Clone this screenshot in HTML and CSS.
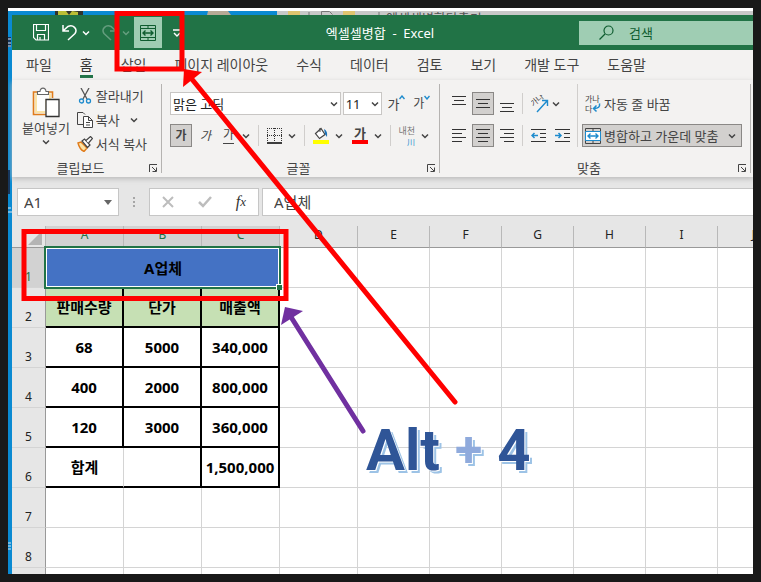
FILE: index.html
```html
<!DOCTYPE html>
<html lang="ko">
<head>
<meta charset="utf-8">
<title>엑셀셀병합 - Excel</title>
<link rel="stylesheet" href="styles.css">
</head>
<body>
<svg class="defs" aria-hidden="true">
  <symbol id="chev" viewBox="0 0 8 8"><path d="M1 2.500 4 5.500 7 2.500" fill="none" stroke="currentColor" stroke-width="1.500"/></symbol>
  <symbol id="launch" viewBox="0 0 9 9"><path d="M.5 8V.5H8M3 3l4 4M7.500 3.500V7.500H3.500" fill="none" stroke="currentColor"/></symbol>
  <symbol id="merge" viewBox="0 0 16 16"><path d="M.5.5h15v15H.5zM8 .5v3M8 12.500v3" fill="none" stroke="var(--edge)"/><path d="M.5 3.500h15v9H.5z" fill="var(--fill)" stroke="var(--mark)"/><path d="M3 8h10M5.500 5.500 3 8l2.500 2.500M10.500 5.500 13 8l-2.500 2.500" fill="none" stroke="var(--mark)" stroke-width="1.400"/></symbol>
</svg>
<div class="desktop">
  <div class="behind">
    <svg width="270" height="4" aria-hidden="true"><path d="M47 0h28v4H47z" fill="#30322c"/><path d="M50 0h8l3 4H50zM64 0l6 1v3h-9z" fill="#b9bd35"/><path d="M200 0h20l3 4h-24z" fill="#b7aa96"/></svg>
    <svg width="108" height="4" aria-hidden="true"><path d="M10 0h12v4H10zM65 0h12v4H65z" fill="#dfc46f"/><path d="M31 1v3M101 1v3" stroke="#777"/><path d="M43.500 4V.5h8l3 3" fill="none" stroke="#777"/></svg>
    <span class="behind-title">엑셀셀병합단축키</span>
  </div>
  <div class="window">
    <header class="titlebar">
      <div class="qat">
        <button class="q save" aria-label="저장"><svg width="16" height="17" viewBox="0 0 16 17"><path d="M.5.5h15v15.500H3L.5 13.500zM3.500.5v6h9v-6M4.500 16v-5.500h7V16M7 13v3" fill="none" stroke="#fff" stroke-width="1.200"/></svg></button>
        <button class="q" aria-label="실행 취소"><svg width="15" height="17" viewBox="0 0 15 17"><path d="M1 1v6h6M1.500 6.500 6 2.500C11 0 16 5 13 9.500L6 16" fill="none" stroke="#fff" stroke-width="1.500"/></svg></button>
        <button class="q chevb" aria-label="실행 취소 목록"><svg width="8" height="8"><use href="#chev"/></svg></button>
        <button class="q dim redo" aria-label="다시 실행"><svg width="15" height="17" viewBox="0 0 15 17"><path d="M14 1v6H8M13.500 6.500 9 2.500C4 0-1 5 2 9.500L9 16" fill="none" stroke="#fff" stroke-width="1.500"/></svg></button>
        <button class="q chevb dim" aria-label="다시 실행 목록"><svg width="8" height="8"><use href="#chev"/></svg></button>
        <button class="q mergeq" aria-label="병합하고 가운데 맞춤 빠른 실행"><svg width="16" height="16"><use href="#merge"/></svg></button>
        <button class="q more" aria-label="빠른 실행 도구 모음 사용자 지정"><svg width="8" height="8" viewBox="0 0 8 8"><path d="M0 1h8M1 4l3 3 3-3" fill="none" stroke="#fff" stroke-width="1.400"/></svg></button>
      </div>
      <h1 class="title">엑셀셀병합&nbsp; -&nbsp; Excel</h1>
      <label class="search"><svg width="15" height="15" viewBox="0 0 15 15"><circle cx="9.500" cy="5.500" r="4.500" fill="none" stroke="#0e5c2f" stroke-width="1.200"/><path d="M6 9 .5 14.500" stroke="#0e5c2f" stroke-width="1.300"/></svg><input type="text" placeholder="검색" aria-label="검색"></label>
    </header>
    <nav class="tabs">
      <a href="#">파일</a><a href="#" class="on">홈</a><a href="#">삽입</a><a href="#">페이지 레이아웃</a><a href="#">수식</a><a href="#">데이터</a><a href="#">검토</a><a href="#">보기</a><a href="#">개발 도구</a><a href="#">도움말</a>
    </nav>
    <div class="ribbon">
      <section class="group clip">
        <div class="body">
          <button class="paste"><svg width="28" height="31" viewBox="0 0 28 31"><path d="M7 5H1.500v22.500H14" fill="none" stroke="#e07b1a" stroke-width="1.600"/><path d="M15 5h5.500v6" fill="none" stroke="#e07b1a" stroke-width="1.600"/><path d="M3 6.500h16V12h-5.500v14H3z" fill="#fbe3a5"/><path d="M5 8h12v4h-4v12H5z" fill="#fdfdfd"/><path d="M5.500 7.500v-3H8C8.500 0 13.500 0 14 4.500h2.500v3z" fill="#fff" stroke="#666" stroke-width="1.100"/><path d="M14 12.500h13v17H14z" fill="#fff" stroke="#333" stroke-width="1.300"/></svg><span>붙여넣기</span><svg width="8" height="8"><use href="#chev"/></svg></button>
          <div class="stack">
            <button><svg width="16" height="16" viewBox="0 0 16 16"><path d="m4 0 6 11M12 0 6 11" fill="none" stroke="#555" stroke-width="1.300"/><circle cx="4.500" cy="13" r="2" fill="none" stroke="#1e8bcd" stroke-width="1.300"/><circle cx="11.500" cy="13" r="2" fill="none" stroke="#1e8bcd" stroke-width="1.300"/></svg>잘라내기</button>
            <button><svg width="16" height="16" viewBox="0 0 16 16"><path d="M6 12.500H.5V.5H6l2 2" fill="none" stroke="#444"/><path d="M6.500 4.500h5l4 4v7h-9zM11.500 4.500v4h4M9 10.500h4M9 13h4" fill="#fff" stroke="#444"/></svg>복사<svg class="cv" width="8" height="8"><use href="#chev"/></svg></button>
            <button><svg width="16" height="16" viewBox="0 0 16 16"><path d="m1 7 3-1 6 6-3 3.500C4 14 2 11 1 7z" fill="#fbe3a5" stroke="#e07b1a" stroke-width="1.400"/><path d="m5 5 2.500-2 5.500 6-2.500 2.500z" fill="#fff" stroke="#444" stroke-width="1.200"/><path d="m9 4.500 4.500-4 2 2-4 4.500" fill="#fff" stroke="#444" stroke-width="1.200"/></svg>서식 복사</button>
          </div>
        </div>
        <footer><span>클립보드</span><button aria-label="클립보드 옵션"><svg width="9" height="9"><use href="#launch"/></svg></button></footer>
      </section>
      <section class="group font">
        <div class="rows">
          <div class="row">
            <span class="combo face"><select aria-label="글꼴"><option>맑은 고딕</option></select><svg width="8" height="8"><use href="#chev"/></svg></span>
            <span class="combo size"><select aria-label="글꼴 크기"><option>11</option></select><svg width="8" height="8"><use href="#chev"/></svg></span>
            <button class="t grow" aria-label="글꼴 크기 크게">가<svg width="6" height="5" viewBox="0 0 6 5"><path d="m.5 4 2.500-3 2.500 3" fill="none" stroke="#1e8bcd" stroke-width="1.400"/></svg></button>
            <button class="t shrink" aria-label="글꼴 크기 작게">가<svg width="6" height="5" viewBox="0 0 6 5"><path d="m.5 1 2.500 3 2.500-3" fill="none" stroke="#1e8bcd" stroke-width="1.400"/></svg></button>
          </div>
          <div class="row">
            <button class="t on b">가</button>
            <button class="t i">가</button>
            <button class="t u"><span>가</span><svg width="8" height="8"><use href="#chev"/></svg></button>
            <i class="sep"></i>
            <button class="t" aria-label="테두리"><svg width="15" height="16" viewBox="0 0 15 16"><path d="M.5 0v14M7.500 0v14M14.500 0v14M0 .5h15M0 7.500h15" stroke="#333" stroke-dasharray="1 1"/><path d="M0 15h15" stroke="#000" stroke-width="1.500"/></svg><svg width="8" height="8"><use href="#chev"/></svg></button>
            <i class="sep"></i>
            <button class="t" aria-label="채우기 색"><svg width="16" height="17" viewBox="0 0 16 17"><path d="M0 13h16v4H0z" fill="#ff0"/><path d="m2.500 6.500 5.500-5 4 6-5.500 4z" fill="#fff" stroke="#444" stroke-width="1.200"/><path d="M7 5V1" stroke="#444"/><path d="M11 2q4 2 3 8l-2-3z" fill="#1e73b8"/></svg><svg width="8" height="8"><use href="#chev"/></svg></button>
            <button class="t color" aria-label="글꼴 색"><span>가</span><svg width="8" height="8"><use href="#chev"/></svg></button>
            <i class="sep"></i>
            <button class="t ruby" aria-label="윗주 필드"><span>내천<small>川</small></span><svg width="8" height="8"><use href="#chev"/></svg></button>
          </div>
        </div>
        <footer><span>글꼴</span><button aria-label="글꼴 옵션"><svg width="9" height="9"><use href="#launch"/></svg></button></footer>
      </section>
      <section class="group align">
        <div class="body">
          <div class="rows">
            <div class="row">
              <button class="t sq" aria-label="위쪽 맞춤"><svg width="14" height="18"><path d="M0 1.500h14M2 5.500h10M0 9.500h14" stroke="#333"/></svg></button>
              <button class="t sq on" aria-label="가운데 맞춤"><svg width="14" height="18"><path d="M0 4.500h14M2 8.500h10M0 12.500h14" stroke="#333"/></svg></button>
              <button class="t sq" aria-label="아래쪽 맞춤"><svg width="14" height="18"><path d="M0 8.500h14M2 12.500h10M0 16.500h14" stroke="#333"/></svg></button>
              <i class="sep"></i>
              <button class="t orient" aria-label="방향"><svg width="18" height="18" viewBox="0 0 18 18"><text class="tiny" x="0" y="10" transform="rotate(-40 4 8)">가나</text><path d="M6 17 16 6M11 5.500h5.500V11" fill="none" stroke="#1e8bcd" stroke-width="1.400"/></svg><svg width="8" height="8"><use href="#chev"/></svg></button>
            </div>
            <div class="row">
              <button class="t sq" aria-label="왼쪽 맞춤"><svg width="14" height="14"><path d="M0 .5h14M0 4.500h10M0 8.500h14M0 12.500h10" stroke="#333"/></svg></button>
              <button class="t sq on" aria-label="텍스트 가운데"><svg width="14" height="14"><path d="M0 .5h14M2 4.500h10M0 8.500h14M2 12.500h10" stroke="#333"/></svg></button>
              <button class="t sq" aria-label="오른쪽 맞춤"><svg width="14" height="14"><path d="M0 .5h14M4 4.500h10M0 8.500h14M4 12.500h10" stroke="#333"/></svg></button>
              <i class="sep"></i>
              <button class="t" aria-label="내어쓰기"><svg width="15" height="14" viewBox="0 0 15 14"><path d="M0 .5h15M9 4.500h6M9 8.500h6M0 12.500h15" stroke="#333"/><path d="M1 6.500h6M3.500 4 1 6.500 3.500 9" fill="none" stroke="#1e8bcd" stroke-width="1.500"/></svg></button>
              <button class="t" aria-label="들여쓰기"><svg width="15" height="14" viewBox="0 0 15 14"><path d="M0 .5h15M9 4.500h6M9 8.500h6M0 12.500h15" stroke="#333"/><path d="M0 6.500h6M3.500 4 6 6.500 3.500 9" fill="none" stroke="#1e8bcd" stroke-width="1.500"/></svg></button>
            </div>
          </div>
          <div class="rows wraps">
            <div class="row"><button class="t wide"><svg width="16" height="20" viewBox="0 0 16 20"><text class="tiny" x="0" y="8">가나</text><text class="tiny" x="0" y="18">다</text><path d="M14.500 9.500q1 5-5.500 5M11.500 11.500 8.500 14.500l3 3" fill="none" stroke="#1e8bcd" stroke-width="1.500"/></svg>자동 줄 바꿈</button></div>
            <div class="row"><button class="t wide on mergeb"><svg width="16" height="16"><use href="#merge"/></svg>병합하고 가운데 맞춤<svg class="cv" width="8" height="8"><use href="#chev"/></svg></button></div>
          </div>
        </div>
        <footer><span>맞춤</span><button aria-label="맞춤 옵션"><svg width="9" height="9"><use href="#launch"/></svg></button></footer>
      </section>
    </div>
    <div class="fbar">
      <label class="namebox"><input type="text" value="A1" aria-label="이름 상자"><svg width="8" height="5"><path d="M0 0h8L4 5z" fill="#666"/></svg></label>
      <svg class="dots" width="2" height="10"><path d="M0 0h2v2H0zM0 4h2v2H0zM0 8h2v2H0z" fill="#a6a6a6"/></svg>
      <div class="fbtns">
        <button aria-label="취소"><svg width="12" height="12"><path d="m1 1 10 10M11 1 1 11" stroke="#bdbdbd" stroke-width="2"/></svg></button>
        <button aria-label="입력"><svg width="14" height="12"><path d="m1 6 4 4 8-9" fill="none" stroke="#bdbdbd" stroke-width="2.500"/></svg></button>
        <button class="fx" aria-label="함수 삽입">f<small>x</small></button>
      </div>
      <input class="formula" type="text" value="A업체" aria-label="수식 입력줄">
    </div>
    <div class="sheet">
      <table>
        <colgroup><col class="c0"><col class="cw"><col class="cw"><col class="cw"><col class="cw"><col class="cn"><col class="cn"><col class="cn"><col class="cn"><col class="cn"><col></colgroup>
        <thead><tr><th class="corner"><svg width="14" height="14"><path d="M14 0v14H0z" fill="#b4b4b4"/></svg></th><th class="sel">A</th><th class="sel">B</th><th class="sel">C</th><th>D</th><th>E</th><th>F</th><th>G</th><th>H</th><th>I</th><th>J</th></tr></thead>
        <tbody>
          <tr><th class="sel">1</th><td colspan="3" class="merged">A업체<span class="handle"></span></td><td></td><td></td><td></td><td></td><td></td><td></td><td></td></tr>
          <tr class="head"><th>2</th><td class="d">판매수량</td><td class="d">단가</td><td class="d">매출액</td><td></td><td></td><td></td><td></td><td></td><td></td><td></td></tr>
          <tr><th>3</th><td class="d">68</td><td class="d">5000</td><td class="d">340,000</td><td></td><td></td><td></td><td></td><td></td><td></td><td></td></tr>
          <tr><th>4</th><td class="d">400</td><td class="d">2000</td><td class="d">800,000</td><td></td><td></td><td></td><td></td><td></td><td></td><td></td></tr>
          <tr><th>5</th><td class="d">120</td><td class="d">3000</td><td class="d">360,000</td><td></td><td></td><td></td><td></td><td></td><td></td><td></td></tr>
          <tr><th>6</th><td class="d open">합계</td><td class="d"></td><td class="d">1,500,000</td><td></td><td></td><td></td><td></td><td></td><td></td><td></td></tr>
          <tr><th>7</th><td></td><td></td><td></td><td></td><td></td><td></td><td></td><td></td><td></td><td></td></tr>
          <tr><th>8</th><td></td><td></td><td></td><td></td><td></td><td></td><td></td><td></td><td></td><td></td></tr>
          <tr><th></th><td></td><td></td><td></td><td></td><td></td><td></td><td></td><td></td><td></td><td></td></tr>
        </tbody>
      </table>
    </div>
  </div>
</div>
<svg class="marks" aria-hidden="true">
  <path d="M8 37h3v10H8zM8 170h2v24H8z" fill="#17365c"/><path d="M8 39h3M8 43h3M8 46h3M8 208h3M8 212h4M8 543h3M8 546h3M8 549h3" stroke="#dce8f2"/>
  <g fill="none" stroke="#f00" stroke-width="5"><path d="M117 13.500h65v55.500h-65zM24 231.500h262v67H24z"/><path d="M455 402 191 78" stroke-linecap="round"/></g>
  <path d="m184 69 18 3-19 15z" fill="#f00"/>
  <path d="M363 431 291 317" stroke="#7030a0" stroke-width="5" stroke-linecap="round"/>
  <path d="m285 307 18 4-22 14z" fill="#7030a0"/>
</svg>
<div class="keys"><span>Alt</span><span class="plus">+</span><span>4</span></div>
</body>
</html>
```
FILE: styles.css
```css
* { box-sizing: border-box; }
html, body { height: 100%; }
body {
  margin: 0;
  padding: 8px;
  background: #191919;
  color: #444;
  font: 13px/20px "Noto Sans", "Noto Sans CJK KR", sans-serif;
  position: relative;
  overflow: hidden;
}
button, input, select { font: inherit; color: inherit; background: none; border: 0; padding: 0; margin: 0; border-radius: 0; }
button { display: flex; align-items: center; }
svg { display: block; flex: none; }
.defs { position: absolute; width: 0; height: 0; }
.desktop { height: 100%; background: linear-gradient(#fff 3px, #0a8ad2 3px); display: flex; flex-direction: column; overflow: hidden; }

.behind { height: 4px; margin-top: 3px; flex: none; display: flex; overflow: hidden; background: linear-gradient(90deg, transparent 269px, #c8c8c8 269px); }
.behind-title { font-size: 13px; line-height: 14px; color: #555; }

.window { margin-left: 4px; flex: 1; min-height: 0; display: flex; flex-direction: column; background: #e6e6e6; }

.titlebar { background: #217346; height: 35px; flex: none; display: flex; align-items: center; }
.qat { display: flex; align-items: center; padding-left: 21px; }
.save { margin-right: 13px; }
.chevb { margin-left: 5px; color: #fff; }
.redo { margin-left: 12px; }
.dim { opacity: .3; }
.mergeq { background: #9fcdb3; width: 28px; height: 31px; justify-content: center; margin-left: 4px; --edge: #0e5c2f; --mark: #0e5c2f; --fill: #9fcdb3; }
.more { margin-left: 11px; }
.title { flex: 1; margin: 0; text-align: center; color: #fff; font-size: 13px; font-weight: 400; white-space: nowrap; }
.search { width: 174px; height: 24px; background: #9fcdb3; display: flex; align-items: center; gap: 15px; padding-left: 20px; }
.search input { min-width: 0; flex: 1; }
.search input::placeholder { color: #0e5c2f; opacity: 1; }

.tabs { background: #f3f2f1; display: flex; gap: 28px; padding: 4px 14px 2px; flex: none; font-size: 14px; line-height: 21px; white-space: nowrap; }
.tabs a { color: #444; text-decoration: none; border-bottom: 3px solid transparent; }
.tabs .on { color: #333; border-color: #217346; }

.ribbon { background: #f3f2f1; height: 97px; flex: none; display: flex; padding: 4px 0; box-shadow: 0 2px 5px #bbb; }
.group { height: 89px; border-right: 1px solid #b5b3b1; display: flex; flex-direction: column; white-space: nowrap; }
.group footer { margin-top: auto; height: 10px; display: flex; align-items: center; padding-right: 3px; }
.group footer span { flex: 1; text-align: center; line-height: 14px; }
.body { display: flex; }
.clip { width: 150px; }
.clip .body { padding-left: 10px; gap: 7px; }
.paste { flex-direction: column; padding-top: 3px; }
.stack button { height: 24px; gap: 3px; }
.cv { margin-left: 7px; }
.rows { display: flex; flex-direction: column; gap: 9px; padding-top: 8px; }
.row { display: flex; align-items: center; height: 23px; }
.t { height: 23px; gap: 6px; }
.t.on { background: #d2d0ce; border: 1px solid #8a8886; justify-content: center; }
.sep { width: 1px; height: 21px; background: #d0cecc; margin: 0 8px; }

.font { width: 278px; padding-left: 8px; }
.combo { position: relative; height: 23px; background: #fff; border: 1px solid #c8c6c4; }
.combo select { appearance: none; width: 100%; height: 100%; padding-left: 2px; color: #222; display: block; }
.combo svg { position: absolute; right: 2px; top: 7px; pointer-events: none; }
.face { width: 172px; }
.size { width: 40px; margin: 0 5px 0 2px; }
.grow, .shrink { gap: 0; width: 26px; }
.grow svg, .shrink svg { align-self: flex-start; margin-top: 3px; }
.shrink { font-size: 12px; }
.b { width: 22px; font-weight: 700; font-size: 12px; }
.i { margin-left: 8px; font-style: italic; font-size: 12px; width: 23px; }
.u span { border-bottom: 1px solid #444; line-height: 16px; font-size: 12px; }
.u { gap: 8px; }
.color { margin-left: 9px; }
.color span { width: 16px; height: 17px; line-height: 12px; font-weight: 700; border-bottom: 4px solid #f00; text-align: center; }
.ruby span { font-size: 9px; line-height: 12px; width: 16px; display: flex; flex-direction: column; align-items: flex-end; color: #777; }
.ruby small { font-size: 8px; line-height: 10px; color: #1e8bcd; }

.align { width: 311px; }
.align .body { padding-left: 8px; }
.sq { width: 22px; justify-content: center; margin-right: 2px; }
.sq + .sep { margin-left: 2px; }
.orient { gap: 3px; }
.align .t + .t:not(.sq) { margin-left: 9px; }
.tiny { font-size: 8px; fill: #444; }
.wraps { border-left: 1px solid #d0cecc; padding-left: 4px; margin-left: 7px; }
.wide { gap: 3px; padding-left: 3px; }
.wide.mergeb { padding: 0 5px 0 2px; --edge: #444; --mark: #1e8bcd; --fill: #fff; }

.fbar { height: 49px; flex: none; padding: 11px 0 10px 5px; display: flex; align-items: stretch; font-size: 15px; }
.namebox { width: 102px; background: #fff; border: 1px solid #c6c6c6; display: flex; align-items: center; padding: 0 6px 0 6px; }
.namebox input { flex: 1; min-width: 0; }
.dots { align-self: center; margin: 0 14px; }
.fbtns { width: 110px; background: #fff; border: 1px solid #c6c6c6; display: flex; align-items: center; justify-content: space-between; padding: 0 12px; }
.fx { font: italic 16px/20px "Liberation Serif", serif; color: #333; }
.fx small { font-size: 13px; }
.formula { flex: 1; min-width: 0; margin-left: 3px; background: #fff; border: 1px solid #c6c6c6; border-right: 0; padding-left: 11px; }

.sheet { flex: 1; min-height: 0; overflow: hidden; background: #fff; }
table { table-layout: fixed; width: 100%; min-width: 778px; border-collapse: separate; border-spacing: 0; }
.c0 { width: 34px; }
.cw { width: 78px; }
.cn { width: 72px; }
th, td { padding: 0; border: solid #d4d4d4; border-width: 0 1px 1px 0; }
th { background: #e6e6e6; color: #222; font-weight: 400; font-size: 12px; line-height: 18px; }
thead th { height: 22px; vertical-align: top; border-color: #999; border-right-color: #b8b8b8; }
tbody th { vertical-align: bottom; border-right-color: #999; padding-bottom: 1px; }
th.sel { background: #d2d2d2; color: #217346; }
.corner svg { margin: 5px 0 0 16px; }
tbody tr { height: 40px; }
td { text-align: center; color: #000; font-size: 15px; font-weight: 700; line-height: 20px; }
.d { border: solid #000; border-width: 0 2px 2px 0; }
.d.open { border-right: 1px solid #d4d4d4; }
.head .d { background: #c6e0b4; }
.merged { position: relative; background: #4472c4; border: 0; }
.merged::before { content: ""; position: absolute; inset: -2px -1px -1px -2px; border: 2px solid #217346; box-shadow: inset 0 0 0 1px #fff; }
.handle { position: absolute; right: -2px; bottom: -2px; width: 6px; height: 6px; background: #217346; border: solid #fff; border-width: 1px 0 0 1px; }

.marks { position: absolute; left: 0; top: 0; width: 100%; height: 100%; pointer-events: none; }
.keys {
  position: absolute; left: 366px; top: 417px;
  display: flex; gap: 15px;
  font: 700 58px/66px Roboto, "Liberation Sans", sans-serif;
  color: #2f5597;
  text-shadow: 1px 1px #fff, 3px 3px #9dc3e6;
}
.plus { color: #8faadc; font-size: 50px; }
```
